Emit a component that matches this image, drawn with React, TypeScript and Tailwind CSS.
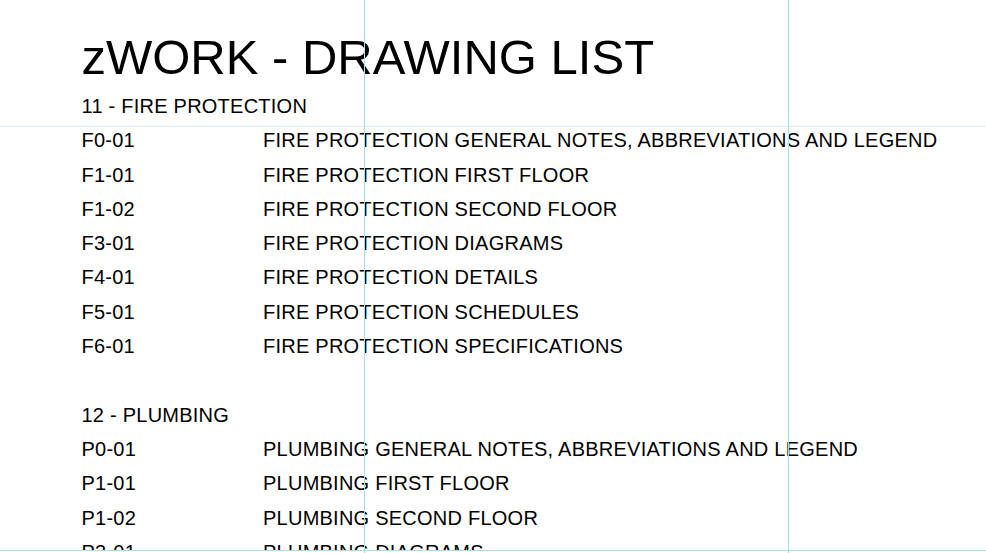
const fire = [
  ['F0-01', 'FIRE PROTECTION GENERAL NOTES, ABBREVIATIONS AND LEGEND'],
  ['F1-01', 'FIRE PROTECTION FIRST FLOOR'],
  ['F1-02', 'FIRE PROTECTION SECOND FLOOR'],
  ['F3-01', 'FIRE PROTECTION DIAGRAMS'],
  ['F4-01', 'FIRE PROTECTION DETAILS'],
  ['F5-01', 'FIRE PROTECTION SCHEDULES'],
  ['F6-01', 'FIRE PROTECTION SPECIFICATIONS'],
]

const plumbing = [
  ['P0-01', 'PLUMBING GENERAL NOTES, ABBREVIATIONS AND LEGEND'],
  ['P1-01', 'PLUMBING FIRST FLOOR'],
  ['P1-02', 'PLUMBING SECOND FLOOR'],
  ['P3-01', 'PLUMBING DIAGRAMS'],
  ['P4-01', 'PLUMBING DETAILS'],
  ['P5-01', 'PLUMBING SCHEDULES'],
]

const Section = ({ title, rows }: { title: string; rows: string[][] }) => (
  <div className="grid grid-cols-[181.5px_1fr] auto-rows-[34.3px] items-center">
    <div className="col-span-2">{title}</div>
    {rows.map(([n, t]) => (
      <div key={n} className="contents">
        <div>{n}</div>
        <div className="whitespace-nowrap">{t}</div>
      </div>
    ))}
  </div>
)

const App = () => {
  return (
    <div
      className="relative h-[553px] w-[986px] overflow-hidden bg-white text-black"
      style={{ fontFamily: '"Liberation Sans", Arial, sans-serif' }}
    >
      <div className="flex h-[551px] flex-col overflow-hidden pl-[81.5px] pt-[26px] text-[20px] leading-[34.3px] tracking-[0.24px]">
        <h1 className="text-[49px] leading-[63px] tracking-normal whitespace-nowrap">zWORK - DRAWING LIST</h1>
        <div className="flex flex-col gap-[34.3px]">
          <Section title="11 - FIRE PROTECTION" rows={fire} />
          <Section title="12 - PLUMBING" rows={plumbing} />
        </div>
      </div>

      {/* guide lines */}
      <div className="absolute left-[364px] top-0 h-full w-px bg-[#a9dfe0]"></div>
      <div className="absolute left-[788px] top-0 h-full w-px bg-[#a9dfe0]"></div>
      <div className="absolute left-0 top-[126px] h-px w-full bg-[#d4eeef]"></div>
      <div className="absolute left-0 top-[550px] h-px w-full bg-[#a9dfe0]"></div>
    </div>
  )
}

export default App
